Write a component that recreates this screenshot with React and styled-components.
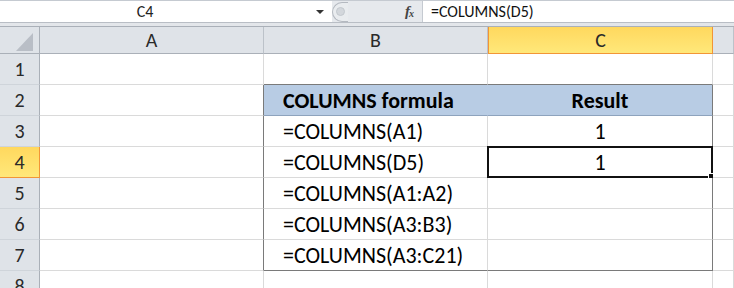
import React from 'react';
import styled, { createGlobalStyle } from 'styled-components';

const GlobalStyle = createGlobalStyle`
  html, body {
    margin: 0;
    padding: 0;
    background: #fff;
  }
  body {
    font-family: Calibri, "Carlito", "Open Sans", "Liberation Sans", sans-serif;
    overflow: hidden;
  }
`;

const Page = styled.div`
  width: 734px;
  height: 288px;
  overflow: hidden;
  display: flex;
  flex-direction: column;
  background: #fff;
`;

const FormulaBar = styled.div`
  height: 22px;
  flex-shrink: 0;
  display: flex;
  border-top: 1px solid #c5cad1;
  box-sizing: border-box;
  background: #e6e9ed;
`;

const NameBox = styled.div`
  width: 332px;
  display: flex;
  align-items: center;
  background: #fff;
  font-size: 16px;
  color: #222;

  span.name {
    flex: 1;
    text-align: center;
    padding-right: 26px;
  }
`;

const DropArrow = styled.div`
  width: 0;
  height: 0;
  border-left: 4px solid transparent;
  border-right: 4px solid transparent;
  border-top: 4px solid #333;
  margin-right: 8px;
`;

const Middle = styled.div`
  width: 90px;
  display: flex;
  align-items: center;
  justify-content: space-between;
  padding-right: 9px;
  box-sizing: border-box;
`;

const Knob = styled.div`
  width: 16px;
  height: 20px;
  border: 1px solid #b4b9c0;
  border-right: none;
  border-radius: 10px 0 0 10px;
  background: #e9ecef;
  display: flex;
  align-items: center;
  justify-content: center;
  box-sizing: border-box;

  &::after {
    content: '';
    width: 7px;
    height: 7px;
    border-radius: 50%;
    background: #d3d7dc;
    border: 1px solid #c3c8ce;
  }
`;

const Fx = styled.span`
  font-family: "Liberation Serif", serif;
  font-style: italic;
  font-weight: 700;
  font-size: 15px;
  color: #444;
  letter-spacing: -1px;

  sub {
    font-size: 10px;
    vertical-align: -1px;
  }
`;

const FormulaInput = styled.div`
  flex: 1;
  background: #fff;
  border-left: 1px solid #c5cad1;
  display: flex;
  align-items: center;
  padding-left: 8px;
  font-size: 16px;
  color: #111;
`;

const Band = styled.div`
  height: 5px;
  flex-shrink: 0;
  background: #e3e6ea;
  border-top: 1px solid #b9bec5;
  border-bottom: 1px solid #aab0b8;
  box-sizing: border-box;
`;

const Grid = styled.div`
  display: grid;
  grid-template-columns: 40px 224px 224px 225px 1fr;
  grid-template-rows: 27px repeat(8, 31px);
  flex-shrink: 0;
`;

const Corner = styled.div`
  background: #dfe3e8;
  border-right: 1px solid #aab0b8;
  border-bottom: 1px solid #aab0b8;
  box-sizing: border-box;
  position: relative;

  &::after {
    content: '';
    position: absolute;
    right: 6px;
    bottom: 2px;
    width: 0;
    height: 0;
    border-left: 17px solid transparent;
    border-bottom: 18px solid #b9bec6;
  }
`;

const ColHead = styled.div`
  box-sizing: border-box;
  display: flex;
  align-items: center;
  justify-content: center;
  font-size: 20px;
  color: #2a2a2a;
  background: ${p => (p.$active ? 'linear-gradient(#ffd85e, #ffe87a)' : '#dfe3e8')};
  border-right: 1px solid ${p => (p.$active ? '#f29536' : '#bcc2c9')};
  border-left: ${p => (p.$active ? '1px solid #f29536' : 'none')};
  border-bottom: 1px solid ${p => (p.$active ? '#f29536' : '#aab0b8')};
`;

const RowHead = styled.div`
  box-sizing: border-box;
  display: flex;
  align-items: center;
  justify-content: center;
  font-size: 20px;
  color: #2a2a2a;
  background: ${p => (p.$active ? 'linear-gradient(#ffd85e, #ffe87a)' : '#dfe3e8')};
  border-right: 1px solid ${p => (p.$active ? '#f29536' : '#aab0b8')};
  border-bottom: 1px solid ${p => (p.$active ? '#f29536' : '#cfd4da')};
`;

const Cell = styled.div`
  box-sizing: border-box;
  display: flex;
  align-items: center;
  justify-content: ${p => (p.$center ? 'center' : 'flex-start')};
  padding-left: ${p => (p.$center ? '0' : '19px')};
  padding-top: 1px;
  font-size: 22px;
  font-weight: ${p => (p.$bold ? 700 : 400)};
  color: #000;
  background: ${p => (p.$fill ? '#b8cce4' : '#fff')};
  border-right: 1px solid ${p => p.$right || '#dadada'};
  border-bottom: 1px solid ${p => p.$bottom || '#dadada'};
  white-space: nowrap;
  position: relative;
`;

const Selection = styled.div`
  position: absolute;
  left: -1px;
  top: -1px;
  right: -1px;
  bottom: -1px;
  border: 2px solid #111;
  pointer-events: none;

  &::after {
    content: '';
    position: absolute;
    right: -4px;
    bottom: -4px;
    width: 5px;
    height: 5px;
    background: #111;
    border: 1px solid #fff;
  }
`;

const rows = [
  { b: '', c: '' },
  { b: 'COLUMNS formula', c: 'Result', head: true },
  { b: '=COLUMNS(A1)', c: '1' },
  { b: '=COLUMNS(D5)', c: '1', selected: true },
  { b: '=COLUMNS(A1:A2)', c: '' },
  { b: '=COLUMNS(A3:B3)', c: '' },
  { b: '=COLUMNS(A3:C21)', c: '' },
  { b: '', c: '' },
];

const frame = '#7a7a7a';

export default function App() {
  return (
    <Page>
      <GlobalStyle />
      <FormulaBar>
        <NameBox>
          <span className="name">C4</span>
          <DropArrow />
        </NameBox>
        <Middle>
          <Knob />
          <Fx>f<sub>x</sub></Fx>
        </Middle>
        <FormulaInput>=COLUMNS(D5)</FormulaInput>
      </FormulaBar>
      <Band />
      <Grid>
        <Corner />
        <ColHead>A</ColHead>
        <ColHead>B</ColHead>
        <ColHead $active>C</ColHead>
        <ColHead />
        {rows.map((r, i) => {
          const n = i + 1;
          const inTable = n >= 2 && n <= 7;
          const aboveTable = n === 1;
          const lastRow = n === 7;
          return (
            <React.Fragment key={n}>
              <RowHead $active={n === 4}>{n}</RowHead>
              <Cell $right={inTable ? frame : undefined} />
              <Cell
                $bold={r.head}
                $fill={r.head}
                $right={r.head ? '#b8cce4' : undefined}
                $bottom={aboveTable || lastRow ? frame : r.head ? '#8ea3bd' : undefined}
              >
                {r.b}
              </Cell>
              <Cell
                $center
                $bold={r.head}
                $fill={r.head}
                $right={inTable ? frame : undefined}
                $bottom={aboveTable || lastRow ? frame : r.head ? '#8ea3bd' : undefined}
              >
                {r.c}
                {r.selected && <Selection />}
              </Cell>
              <Cell />
            </React.Fragment>
          );
        })}
      </Grid>
    </Page>
  );
}
